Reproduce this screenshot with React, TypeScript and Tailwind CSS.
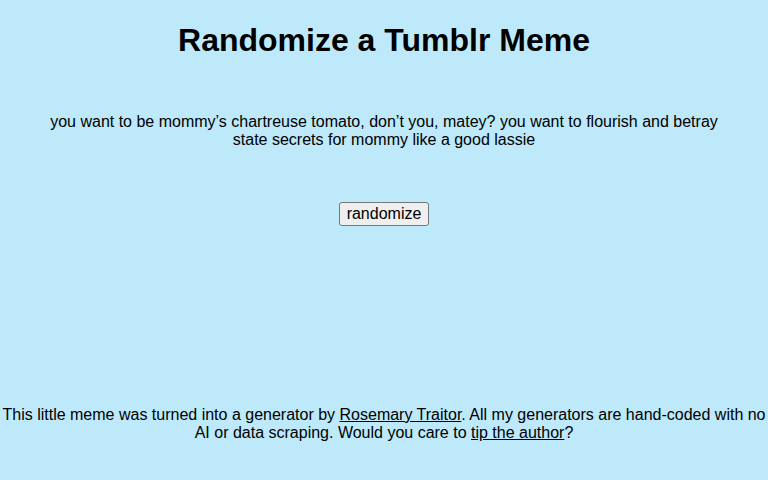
export default function App() {
  return (
    <div
      className="min-h-screen w-full bg-[#bde9fb] text-black text-center"
      style={{ fontFamily: '"Liberation Sans", Arial, sans-serif' }}
    >
      <h1 className="pt-[22px] text-[32px] font-bold leading-[37px]">
        Randomize a Tumblr Meme
      </h1>

      {/* generated meme */}
      <p className="mt-[54px] px-[48px] text-[16px] leading-[18px]">
        you want to be mommy’s chartreuse tomato, don’t you, matey? you want to flourish and betray state secrets for mommy like a good lassie
      </p>

      <div className="mt-[53px]">
        <button className="h-[24px] px-[7px] text-[16px] leading-[18px] bg-[#efefef] border border-[#767676] rounded-[3px] text-black">
          randomize
        </button>
      </div>

      <footer className="mt-[180px] text-[16px] leading-[18px]">
        This little meme was turned into a generator by{" "}
        <a href="#" className="underline">Rosemary Traitor</a>. All my generators are hand-coded with no AI or data scraping. Would you care to{" "}
        <a href="#" className="underline">tip the author</a>?
      </footer>
    </div>
  );
}
